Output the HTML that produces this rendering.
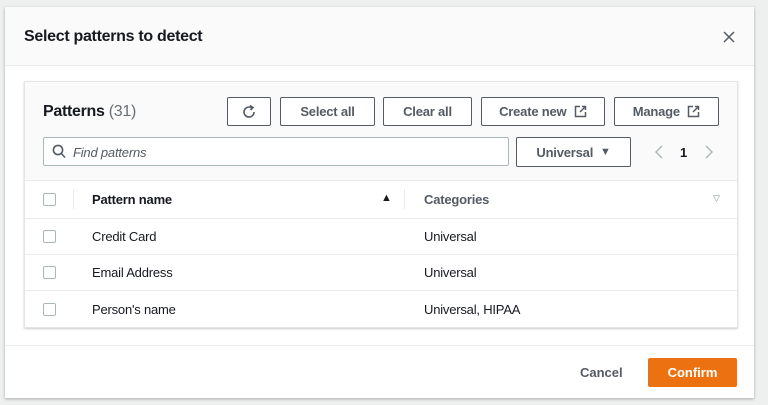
<!DOCTYPE html>
<html><head><style>
*{box-sizing:border-box;margin:0;padding:0}
body{width:768px;height:405px;background:#eef0f0;font-family:"Liberation Sans",sans-serif;color:#16191f;position:relative;overflow:hidden}
.a{position:absolute}
.modal{left:5px;top:7px;width:749px;height:391px;background:#fff;box-shadow:0 1px 3px rgba(0,0,0,.3)}
.hdr{left:0;top:0;width:749px;height:59px;background:#fafafa;border-bottom:1px solid #eaeded}
.btn{position:absolute;top:97px;height:29px;border:1px solid #545b64;background:#fff;font-size:13px;font-weight:bold;color:#545b64;display:flex;align-items:center;justify-content:center;border-radius:2px;letter-spacing:-.2px}
.cb{position:absolute;left:43px;width:13px;height:13px;border:1px solid #aab7b8;border-radius:2px;background:#fff}
.t{position:absolute;font-size:13px;color:#16191f;letter-spacing:-.2px}
.line{position:absolute;left:25px;width:712px;height:1px;background:#eaeded}
</style></head><body>
<div class="a modal">
 <div class="a hdr"></div>
 <div class="a" style="left:19px;top:21px;font-size:16px;font-weight:bold;letter-spacing:-.3px">Select patterns to detect</div>
 <svg class="a" style="left:717px;top:23px" width="14" height="14" viewBox="0 0 14 14"><path d="M2 2L12 12M12 2L2 12" stroke="#545b64" stroke-width="1.5"/></svg>
</div>
<div class="a" style="left:24px;top:81px;width:714px;height:247px;background:#fff;border:1px solid #e3e6e6;box-shadow:0 1px 2px rgba(0,0,0,.2)"></div>
<div class="a" style="left:25px;top:82px;width:712px;height:99px;background:#fafafa;border-bottom:1px solid #eaeded"></div>
<div class="a" style="left:43px;top:103px;font-size:16px;font-weight:bold;letter-spacing:-.3px">Patterns <span style="font-weight:normal;color:#687078">(31)</span></div>
<div class="btn" style="left:227px;width:44px"><svg width="16" height="16" viewBox="0 0 16 16"><path d="M13 8A5 5 0 1 1 10.5 3.7" fill="none" stroke="#545b64" stroke-width="1.6"/><path d="M9 1.5L12 3.5L9.5 6" fill="none" stroke="#545b64" stroke-width="1.6"/></svg></div>
<div class="btn" style="left:280px;width:95px">Select all</div>
<div class="btn" style="left:383px;width:89px">Clear all</div>
<div class="btn" style="left:481px;width:124px">Create new&nbsp;<svg width="13" height="13" viewBox="0 0 13 13" style="margin-left:4px"><path d="M6 1.5H1.5V11.5H11.5V7M8 1.5H11.5V5M11.5 1.5L6 7" fill="none" stroke="#545b64" stroke-width="1.5"/></svg></div>
<div class="btn" style="left:614px;width:105px">Manage&nbsp;<svg width="13" height="13" viewBox="0 0 13 13" style="margin-left:4px"><path d="M6 1.5H1.5V11.5H11.5V7M8 1.5H11.5V5M11.5 1.5L6 7" fill="none" stroke="#545b64" stroke-width="1.5"/></svg></div>
<div class="a" style="left:43px;top:137px;width:466px;height:29px;border:1px solid #aab7b8;background:#fff;border-radius:2px"></div>
<svg class="a" style="left:52px;top:144px" width="14" height="15" viewBox="0 0 14 15"><circle cx="6" cy="6" r="4.6" fill="none" stroke="#545b64" stroke-width="1.6"/><path d="M9.3 9.5L13 13.5" stroke="#545b64" stroke-width="1.6"/></svg>
<div class="a" style="left:73px;top:145px;font-size:13px;font-style:italic;color:#545b64;letter-spacing:-.2px">Find patterns</div>
<div class="btn" style="left:516px;top:137px;width:115px;height:30px">Universal&nbsp;&nbsp;<span style="font-size:11px">▼</span></div>
<svg class="a" style="left:654px;top:145px" width="10" height="14" viewBox="0 0 10 14"><path d="M8 1L2 7L8 13" fill="none" stroke="#aab7b8" stroke-width="1.4"/></svg>
<div class="a" style="left:680px;top:145px;font-size:13px;font-weight:bold">1</div>
<svg class="a" style="left:704px;top:145px" width="10" height="14" viewBox="0 0 10 14"><path d="M2 1L8 7L2 13" fill="none" stroke="#aab7b8" stroke-width="1.4"/></svg>
<div class="line" style="top:218px"></div>
<div class="line" style="top:254px"></div>
<div class="line" style="top:290px"></div>
<div class="a" style="left:73px;top:189px;width:1px;height:20px;background:#eaeded"></div>
<div class="a" style="left:404px;top:189px;width:1px;height:20px;background:#eaeded"></div>
<div class="cb" style="top:193px"></div>
<div class="t" style="left:92px;top:192px;font-weight:bold">Pattern name</div>
<div class="a" style="left:381px;top:192px;font-size:11px">▲</div>
<div class="t" style="left:424px;top:192px;font-weight:bold;color:#545b64">Categories</div>
<div class="a" style="left:713px;top:193px;font-size:9px;color:#879596">▽</div>
<div class="cb" style="top:230px"></div><div class="t" style="left:92px;top:229px">Credit Card</div><div class="t" style="left:424px;top:229px">Universal</div>
<div class="cb" style="top:266px"></div><div class="t" style="left:92px;top:265px">Email Address</div><div class="t" style="left:424px;top:265px">Universal</div>
<div class="cb" style="top:303px"></div><div class="t" style="left:92px;top:302px">Person's name</div><div class="t" style="left:424px;top:302px">Universal, HIPAA</div>
<div class="a" style="left:5px;top:345px;width:749px;height:1px;background:#eaeded"></div>
<div class="a" style="left:580px;top:365px;font-size:13px;font-weight:bold;color:#545b64">Cancel</div>
<div class="a" style="left:648px;top:358px;width:89px;height:29px;background:#ec7211;border-radius:2px;color:#fff;font-size:13px;font-weight:bold;display:flex;align-items:center;justify-content:center">Confirm</div>
</body></html>
